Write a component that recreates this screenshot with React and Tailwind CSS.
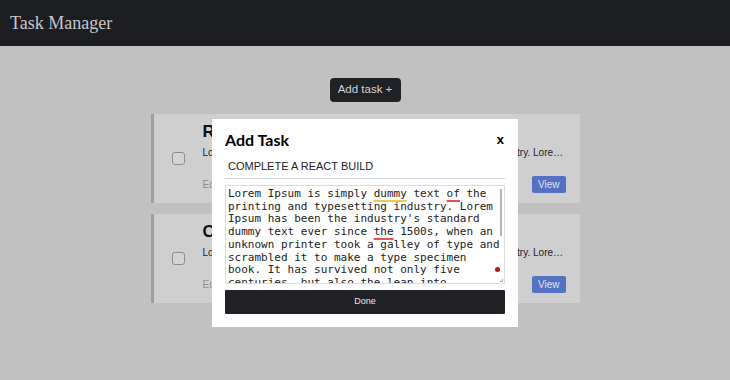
import { useState } from 'react';

// ─── Data ─────────────────────────────────────────────────────────────────────
const LOREM =
  'Lorem Ipsum is simply dummy text of the printing and typesetting industry. Lorem Ipsum has been the industry\'s standard dummy text ever since the 1500s, when an unknown printer took a galley of type and scrambled it to make a type specimen book.';

const tasks = [
  { id: 1, title: 'React Project', body: LOREM },
  { id: 2, title: 'Clean the room', body: LOREM },
];

// ─── Task Card ────────────────────────────────────────────────────────────────
function TaskCard({ task }) {
  return (
    <div className="flex h-[89px] w-[429px] border-l-[3px] border-[#9f9f9f] bg-[#cfcfcf]">
      <div className="flex w-[49px] items-center justify-center">
        <span className="h-[13px] w-[13px] rounded-[3px] border border-[#8e8e8e] bg-[#d4d4d4]" />
      </div>
      <div className="flex min-w-0 flex-1 flex-col pr-[14px] pt-[7px]">
        <h3 className="text-[17px] font-bold leading-[22px] text-[#111]">{task.title}</h3>
        <p className="mt-[3px] truncate text-[10px] leading-[14px] text-[#222]">{task.body}</p>
        <div className="mt-[16px] flex items-center justify-between">
          <span className="text-[10px] text-[#8a8f95]">Edit</span>
          <button className="h-[17px] rounded-[2px] bg-[#5571c1] px-[6px] text-[10px] text-[#dfe4f3]">View</button>
        </div>
      </div>
    </div>
  );
}

// ─── Modal ────────────────────────────────────────────────────────────────────
function AddTaskModal() {
  const [title, setTitle] = useState('COMPLETE A REACT BUILD');

  return (
    <div className="absolute left-[212px] top-[119px] flex h-[208px] w-[306px] flex-col bg-white px-[13px] pt-[11px]">
      <div className="flex items-center justify-between">
        <h2 className="font-['Lato',sans-serif] text-[16px] font-bold leading-[20px] text-black">Add Task</h2>
        <span className="pr-[1px] text-[13px] font-bold text-black">x</span>
      </div>

      <input
        value={title}
        onChange={(e) => setTitle(e.target.value)}
        className="mt-[4px] h-[25px] w-full border-b border-[#cfd2da] px-[3px] text-[11px] text-[#222] outline-none"
      />

      {/* description box */}
      <div className="relative mt-[6px] h-[99px] w-full overflow-hidden border border-[#dcdcdc] px-[2px] pt-[2px] font-['DejaVu_Sans_Mono',monospace] text-[11px] leading-[12.7px] text-[#222]">
        <p className="whitespace-normal break-words">
          Lorem Ipsum is simply{' '}
          <span className="underline decoration-[#f2c94c] decoration-2 underline-offset-[3px]">dummy</span> text{' '}
          <span className="underline decoration-[#e45454] decoration-2 underline-offset-[3px]">of</span> the printing and
          typesetting industry. Lorem Ipsum has been the industry's standard dummy text ever since{' '}
          <span className="underline decoration-[#e45454] decoration-2 underline-offset-[3px]">the</span> 1500s, when an
          unknown printer took a galley of type and scrambled it to make a type specimen book. It has survived not only
          five centuries, but also the leap into electronic typesetting, remaining essentially unchanged.
        </p>
        <span className="absolute right-[2px] top-[3px] h-[47px] w-[2px] bg-[#b5b5b5]" />
        <span className="absolute right-[4px] top-[81px] h-[5px] w-[5px] rounded-full bg-[#b01818]" />
        <span className="absolute bottom-[1px] right-[1px] h-[3px] w-[3px] border-b border-r border-[#aaa]" />
      </div>

      <button className="mt-[6px] h-[24px] w-full rounded-[1px] bg-[#202226] text-[9px] text-[#e8e8e8]">Done</button>
    </div>
  );
}

// ─── App ──────────────────────────────────────────────────────────────────────
export default function App() {
  return (
    <div className="relative h-[380px] w-[730px] overflow-hidden bg-[#c1c1c2] font-['Liberation_Sans',Arial,sans-serif]">
      <header className="flex h-[46px] items-center bg-[#1d1e22] px-[10px]">
        <h1 className="font-['Liberation_Serif',serif] text-[18px] text-[#c9c6cc]">Task Manager</h1>
      </header>

      <main className="flex flex-col items-center pt-[32px]">
        <button className="h-[24px] w-[71px] rounded-[4px] bg-[#1f2125] text-[11.5px] text-[#d3d0d8]">Add task +</button>
        <div className="mt-[12px] flex flex-col gap-[11px]">
          {tasks.map((t) => (
            <TaskCard key={t.id} task={t} />
          ))}
        </div>
      </main>

      <AddTaskModal />
    </div>
  );
}
